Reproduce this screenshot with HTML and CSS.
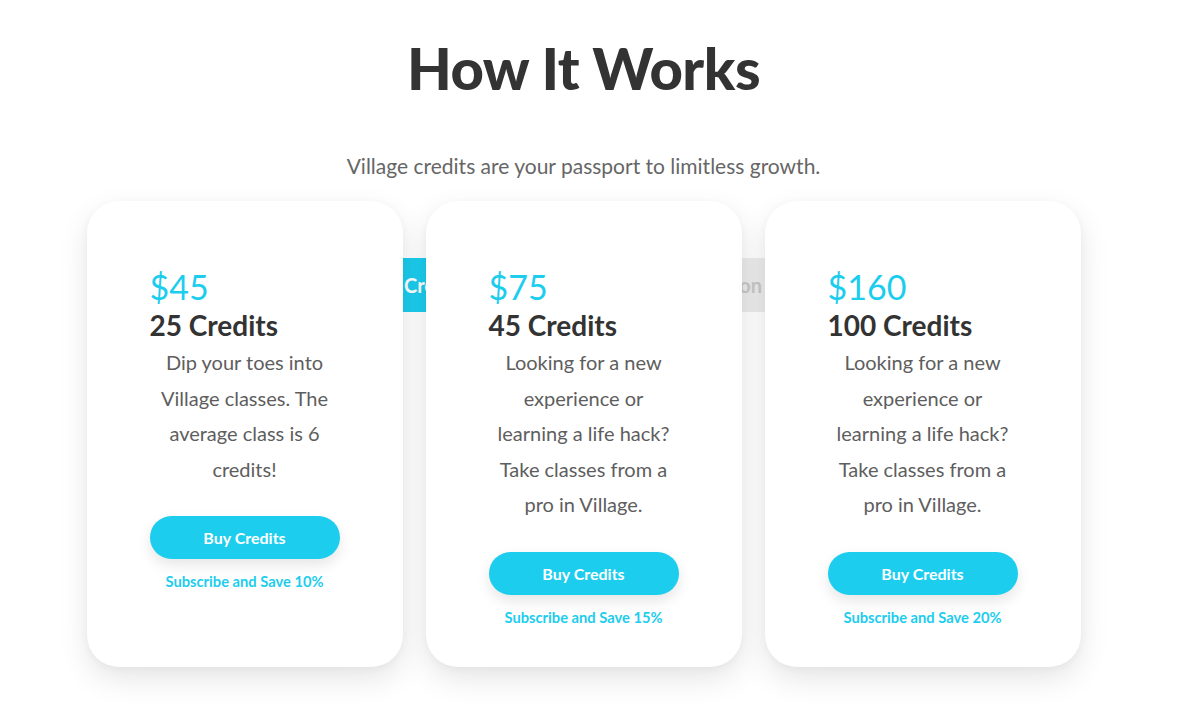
FILE: index.html
```html
<!DOCTYPE html>
<html lang="en">
<head>
<meta charset="utf-8">
<title>How It Works</title>
<link rel="stylesheet" href="styles.css">
</head>
<body>
<main class="page">
  <h1 class="title">How It Works</h1>
  <p class="subtitle">Village credits are your passport to limitless growth.</p>
  <section class="plans">
    <div class="tabs">
      <span class="tab tab-active">Credits</span>
      <span class="tab tab-idle">Subscription</span>
    </div>
    <article class="card">
      <div class="price">$45</div>
      <div class="credits">25 Credits</div>
      <p class="desc">Dip your toes into Village classes. The average class is 6 credits!</p>
      <button class="buy">Buy Credits</button>
      <a class="save">Subscribe and Save 10%</a>
    </article>
    <article class="card">
      <div class="price">$75</div>
      <div class="credits">45 Credits</div>
      <p class="desc">Looking for a new experience or learning a life hack? Take classes from a pro in Village.</p>
      <button class="buy">Buy Credits</button>
      <a class="save">Subscribe and Save 15%</a>
    </article>
    <article class="card">
      <div class="price">$160</div>
      <div class="credits">100 Credits</div>
      <p class="desc">Looking for a new experience or learning a life hack? Take classes from a pro in Village.</p>
      <button class="buy">Buy Credits</button>
      <a class="save">Subscribe and Save 20%</a>
    </article>
  </section>
</main>
</body>
</html>
```
FILE: styles.css
```css
html, body {
  margin: 0;
  padding: 0;
  background: #ffffff;
}
body {
  font-family: Lato, "Open Sans", sans-serif;
  color: #333333;
}
.page {
  width: 1167px;
}
.title {
  margin: 0;
  padding-top: 30px;
  font-family: Lato, sans-serif;
  font-weight: 900;
  font-size: 58px;
  line-height: 76px;
  letter-spacing: -0.5px;
  text-align: center;
  color: #333333;
}
.subtitle {
  margin: 48px 0 0;
  font-size: 21px;
  line-height: 24px;
  text-align: center;
  color: #666666;
}
.plans {
  position: relative;
  display: flex;
  justify-content: center;
  gap: 23px;
  margin-top: 23px;
  padding-bottom: 60px;
}
.tabs {
  position: absolute;
  top: 57px;
  left: 322px;
  display: flex;
  height: 54px;
}
.tab {
  display: flex;
  align-items: center;
  height: 54px;
  font-size: 20px;
  font-weight: 700;
}
.tab-active {
  width: 180px;
  padding-left: 82px;
  box-sizing: border-box;
  background: #1ccdee;
  color: #ffffff;
}
.tab-idle {
  width: 288px;
  justify-content: flex-end;
  padding-right: 28px;
  box-sizing: border-box;
  background: #ececec;
  color: #c8c8c8;
}
.card {
  position: relative;
  z-index: 1;
  width: 316px;
  box-sizing: border-box;
  padding: 66px 63px 40px;
  background: #ffffff;
  border-radius: 32px;
  box-shadow: 0 12px 30px rgba(0, 0, 0, 0.10), 0 2px 8px rgba(0, 0, 0, 0.04);
  display: flex;
  flex-direction: column;
}
.price {
  font-size: 34px;
  line-height: 40px;
  color: #1ccdee;
}
.credits {
  font-size: 28px;
  line-height: 36px;
  font-weight: 700;
  color: #333333;
}
.desc {
  margin: 2px 0 0;
  font-size: 20px;
  line-height: 35.5px;
  text-align: center;
  color: #5e5e5e;
}
.buy {
  margin-top: 29px;
  height: 43px;
  width: 190px;
  border: 0;
  border-radius: 22px;
  background: #1ccdee;
  color: #ffffff;
  font-family: Lato, sans-serif;
  font-weight: 700;
  font-size: 16px;
  box-shadow: 0 6px 14px rgba(0, 0, 0, 0.10);
}
.save {
  margin-top: 12px;
  font-size: 14.7px;
  line-height: 20px;
  font-weight: 700;
  text-align: center;
  color: #1ccdee;
}
```
